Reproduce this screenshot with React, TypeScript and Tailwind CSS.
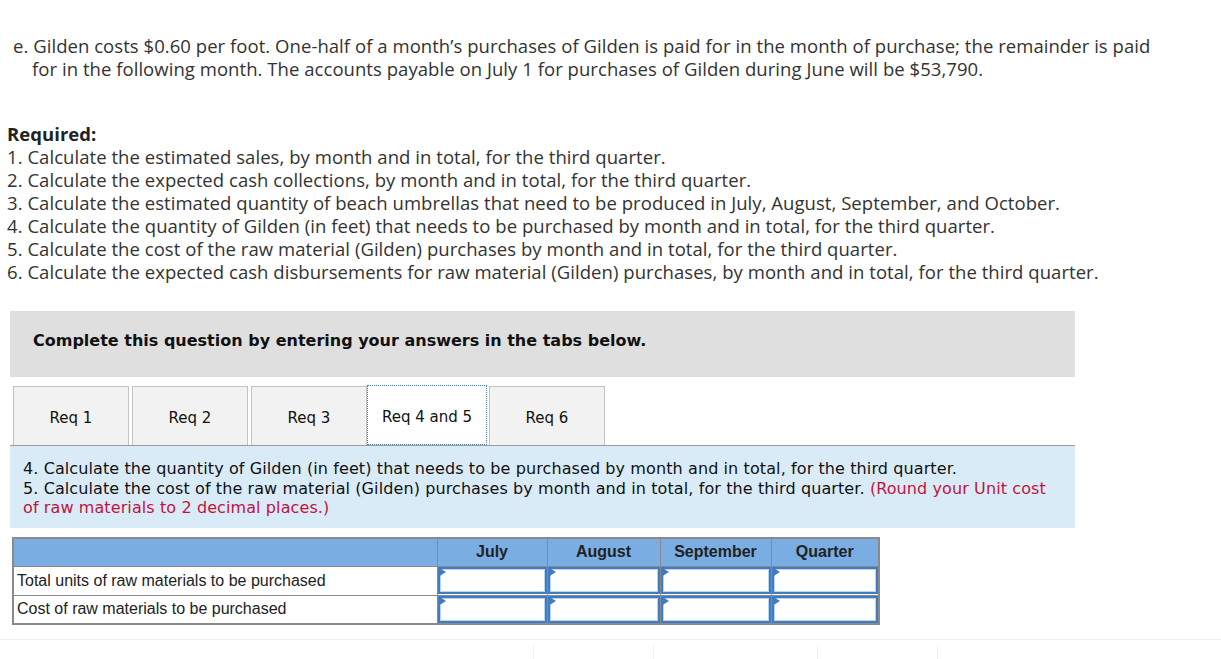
import React from 'react';

const requirements = [
  '1. Calculate the estimated sales, by month and in total, for the third quarter.',
  '2. Calculate the expected cash collections, by month and in total, for the third quarter.',
  '3. Calculate the estimated quantity of beach umbrellas that need to be produced in July, August, September, and October.',
  '4. Calculate the quantity of Gilden (in feet) that needs to be purchased by month and in total, for the third quarter.',
  '5. Calculate the cost of the raw material (Gilden) purchases by month and in total, for the third quarter.',
  '6. Calculate the expected cash disbursements for raw material (Gilden) purchases, by month and in total, for the third quarter.',
];

const tabs = ['Req 1', 'Req 2', 'Req 3', 'Req 4 and 5', 'Req 6'];
const months = [
  { label: 'July', w: 'w-[110px]' },
  { label: 'August', w: 'w-[113px]' },
  { label: 'September', w: 'w-[111px]' },
  { label: 'Quarter', w: 'w-[108px]' },
];
const rows = ['Total units of raw materials to be purchased', 'Cost of raw materials to be purchased'];

const InputCell = () => (
  <td className="border border-[#8a8a8a] p-0 h-[29px]">
    <div className="relative h-[27px] border-2 border-[#3f7cc2] bg-white">
      <div className="absolute inset-0 border border-[#b9d3f0]" />
      <span className="absolute -left-[2px] -top-[2px] w-0 h-0 border-y-[5px] border-y-transparent border-l-[8px] border-l-[#3f7cc2]" />
    </div>
  </td>
);

export default function App() {
  return (
    <div className="w-[1221px] h-[659px] overflow-hidden bg-white text-[#333]">
      <div className="pt-[34px] pl-[13px] pr-2 font-['Open_Sans',sans-serif] text-[18.5px] leading-[23px] tracking-[0.05px]">
        <p>e. Gilden costs $0.60 per foot. One-half of a month’s purchases of Gilden is paid for in the month of purchase; the remainder is paid</p>
        <p className="pl-[19px]">for in the following month. The accounts payable on July 1 for purchases of Gilden during June will be $53,790.</p>
      </div>

      <div className="mt-[42px] pl-[7px] font-['Open_Sans',sans-serif] text-[18.5px] leading-[23px] tracking-[0.05px]">
        <p className="font-bold text-[#222]">Required:</p>
        {requirements.map((r) => (
          <p key={r}>{r}</p>
        ))}
      </div>

      <div className="ml-[10px] w-[1065px] mt-[28px] font-['DejaVu_Sans',sans-serif]">
        <div className="h-[66px] bg-[#dfdfdf] flex items-center pb-[7px] pl-[23px] text-[16px] font-bold text-[#111]">
          Complete this question by entering your answers in the tabs below.
        </div>

        <div className="mt-[9px] flex items-end pl-[3px] gap-[3px] border-b border-[#9a9a9a] h-[60px]">
          {tabs.map((t) => {
            const active = t === 'Req 4 and 5';
            return (
              <div
                key={t}
                className={
                  active
                    ? '-ml-[3px] -mr-[1px] w-[120px] h-[60px] pt-[4px] bg-white border border-dotted border-[#3f7cc2] flex items-center justify-center text-[15px] text-[#111]'
                    : 'w-[116px] h-[59px] pt-[4px] bg-[#f2f2f2] border border-b-0 border-[#c3c3c3] flex items-center justify-center text-[15px] text-[#111]'
                }
              >
                {t}
              </div>
            );
          })}
        </div>

        <div className="h-[82px] bg-[#daebf8] pt-[13px] pl-[13px] pr-[14px] text-[16px] leading-[19.5px] tracking-[0.1px] text-[#111]">
          <p>4. Calculate the quantity of Gilden (in feet) that needs to be purchased by month and in total, for the third quarter.</p>
          <p>
            5. Calculate the cost of the raw material (Gilden) purchases by month and in total, for the third quarter.{' '}
            <span className="text-[#c0143c]">(Round your Unit cost of raw materials to 2 decimal places.)</span>
          </p>
        </div>
      </div>

      <table className="ml-[12px] mt-[9px] border-collapse font-['Liberation_Sans',sans-serif] border-2 border-[#8a8a8a]">
        <thead>
          <tr className="bg-[#7aade2] h-[28px]">
            <th className="w-[424px] border border-[#8a8a8a]" />
            {months.map((m) => (
              <th key={m.label} className={`${m.w} border border-[#8a8a8a] text-[16px] font-bold text-[#222] text-center`}>
                {m.label}
              </th>
            ))}
          </tr>
        </thead>
        <tbody>
          {rows.map((r) => (
            <tr key={r}>
              <td className="border border-[#8a8a8a] pl-[3px] text-[16px] text-[#222] h-[28px]">{r}</td>
              {months.map((m) => (
                <InputCell key={m.label} />
              ))}
            </tr>
          ))}
        </tbody>
      </table>

      <div className="mt-[14px] border-t border-[#eeeeee] h-[30px] relative">
        <div className="absolute top-[6px] left-[533px] h-[20px] border-l border-[#eeeeee]" />
        <div className="absolute top-[6px] left-[653px] h-[20px] border-l border-[#eeeeee]" />
        <div className="absolute top-[6px] left-[817px] h-[20px] border-l border-[#eeeeee]" />
        <div className="absolute top-[6px] left-[937px] h-[20px] border-l border-[#eeeeee]" />
      </div>
    </div>
  );
}
